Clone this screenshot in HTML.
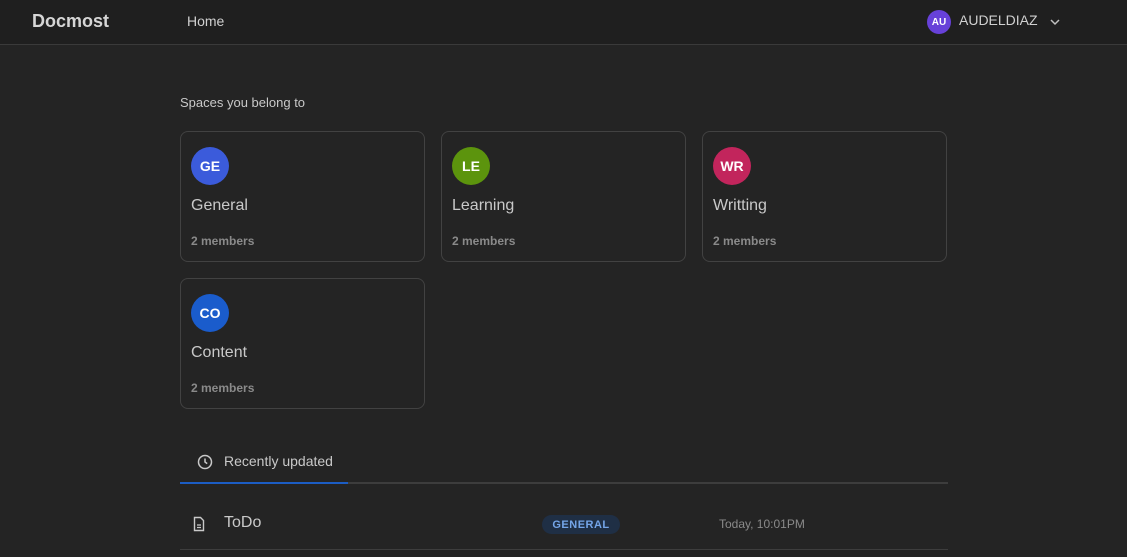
<!DOCTYPE html>
<html><head><style>
*{box-sizing:border-box;margin:0;padding:0}
body{width:1127px;height:557px;overflow:hidden;background:#242424;font-family:"Liberation Sans",sans-serif;color:#c9c9c9;position:relative}
.hdr{position:absolute;left:0;top:0;width:1127px;height:45px;background:#1f1f1f;border-bottom:1px solid #3a3a3a}
.abs{position:absolute}
.card{position:absolute;width:245px;height:131px;border:1px solid #424242;border-radius:8px;background:#242424}
.av{position:absolute;left:10px;top:15px;width:38px;height:38px;border-radius:50%;color:#fff;font-weight:bold;font-size:14px;display:flex;align-items:center;justify-content:center}
.nm{position:absolute;left:10px;top:65px;font-size:16px;color:#c9c9c9}
.mb{position:absolute;left:10px;top:102px;font-size:12px;font-weight:bold;color:#8a8a8a}
</style></head><body>
<div class="hdr">
<div class="abs" style="left:32px;top:11px;font-size:18px;font-weight:bold;color:#d6d6d6">Docmost</div>
<div class="abs" style="left:187px;top:13px;font-size:14px;color:#d0d0d0">Home</div>
<div class="abs" style="left:927px;top:10px;width:24px;height:24px;border-radius:50%;background:#6741d9;color:#fff;font-size:10px;font-weight:bold;display:flex;align-items:center;justify-content:center">AU</div>
<div class="abs" style="left:959px;top:12px;font-size:14px;color:#d0d0d0">AUDELDIAZ</div>
<svg class="abs" style="left:1049px;top:17px" width="12" height="10" viewBox="0 0 12 10"><path d="M2 3l4 4 4-4" stroke="#c0c0c0" stroke-width="1.5" fill="none"/></svg>
</div>
<div class="abs" style="left:180px;top:95px;font-size:13px;color:#c9c9c9">Spaces you belong to</div>
<div class="card" style="left:180px;top:131px"><div class="av" style="background:#3b5bdb">GE</div><div class="nm">General</div><div class="mb">2 members</div></div>
<div class="card" style="left:441px;top:131px"><div class="av" style="background:#5c940d">LE</div><div class="nm">Learning</div><div class="mb">2 members</div></div>
<div class="card" style="left:702px;top:131px"><div class="av" style="background:#c2255c">WR</div><div class="nm">Writting</div><div class="mb">2 members</div></div>
<div class="card" style="left:180px;top:278px"><div class="av" style="background:#1a5ccc">CO</div><div class="nm">Content</div><div class="mb">2 members</div></div>
<svg class="abs" style="left:197px;top:454px" width="16" height="16" viewBox="0 0 16 16"><circle cx="8" cy="8" r="6.5" stroke="#c9c9c9" stroke-width="1.5" fill="none"/><path d="M8 4.5V8l2.2 1.6" stroke="#c9c9c9" stroke-width="1.5" fill="none"/></svg>
<div class="abs" style="left:224px;top:453px;font-size:14px;color:#c9c9c9">Recently updated</div>
<div class="abs" style="left:180px;top:482px;width:768px;height:2px;background:#3d3d3d"></div>
<div class="abs" style="left:180px;top:482px;width:168px;height:2px;background:#1c5dc4"></div>
<svg class="abs" style="left:192px;top:516px" width="14" height="16" viewBox="0 0 14 16"><path d="M2.5 1.5h6l3 3v10h-9z" stroke="#c9c9c9" stroke-width="1.4" fill="none"/><path d="M5 9h4M5 11.5h4" stroke="#c9c9c9" stroke-width="1.2"/></svg>
<div class="abs" style="left:224px;top:514px;font-size:16px;color:#c9c9c9">ToDo</div>
<div class="abs" style="left:542px;top:515px;width:78px;height:19px;border-radius:10px;background:#1f2f45;color:#74a5e8;font-size:11px;font-weight:bold;display:flex;align-items:center;justify-content:center;letter-spacing:.5px">GENERAL</div>
<div class="abs" style="left:719px;top:517px;font-size:12px;color:#8a8a8a">Today, 10:01PM</div>
<div class="abs" style="left:180px;top:549px;width:768px;height:1px;background:#3d3d3d"></div>
</body></html>
